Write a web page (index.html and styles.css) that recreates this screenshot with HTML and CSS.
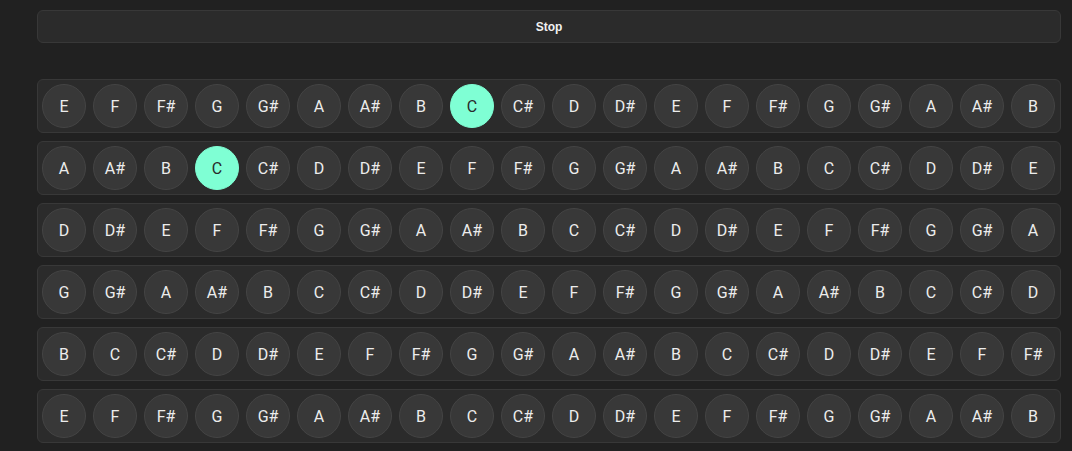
FILE: index.html
```html
<!DOCTYPE html>
<html>
<head>
<meta charset="utf-8">
<link rel="stylesheet" href="styles.css">
</head>
<body>
<div class="app">
  <button class="stop">Stop</button>
  <div class="board">
    <div class="string"><span class="note">E</span><span class="note">F</span><span class="note">F#</span><span class="note">G</span><span class="note">G#</span><span class="note">A</span><span class="note">A#</span><span class="note">B</span><span class="note active">C</span><span class="note">C#</span><span class="note">D</span><span class="note">D#</span><span class="note">E</span><span class="note">F</span><span class="note">F#</span><span class="note">G</span><span class="note">G#</span><span class="note">A</span><span class="note">A#</span><span class="note">B</span></div>
    <div class="string"><span class="note">A</span><span class="note">A#</span><span class="note">B</span><span class="note active">C</span><span class="note">C#</span><span class="note">D</span><span class="note">D#</span><span class="note">E</span><span class="note">F</span><span class="note">F#</span><span class="note">G</span><span class="note">G#</span><span class="note">A</span><span class="note">A#</span><span class="note">B</span><span class="note">C</span><span class="note">C#</span><span class="note">D</span><span class="note">D#</span><span class="note">E</span></div>
    <div class="string"><span class="note">D</span><span class="note">D#</span><span class="note">E</span><span class="note">F</span><span class="note">F#</span><span class="note">G</span><span class="note">G#</span><span class="note">A</span><span class="note">A#</span><span class="note">B</span><span class="note">C</span><span class="note">C#</span><span class="note">D</span><span class="note">D#</span><span class="note">E</span><span class="note">F</span><span class="note">F#</span><span class="note">G</span><span class="note">G#</span><span class="note">A</span></div>
    <div class="string"><span class="note">G</span><span class="note">G#</span><span class="note">A</span><span class="note">A#</span><span class="note">B</span><span class="note">C</span><span class="note">C#</span><span class="note">D</span><span class="note">D#</span><span class="note">E</span><span class="note">F</span><span class="note">F#</span><span class="note">G</span><span class="note">G#</span><span class="note">A</span><span class="note">A#</span><span class="note">B</span><span class="note">C</span><span class="note">C#</span><span class="note">D</span></div>
    <div class="string"><span class="note">B</span><span class="note">C</span><span class="note">C#</span><span class="note">D</span><span class="note">D#</span><span class="note">E</span><span class="note">F</span><span class="note">F#</span><span class="note">G</span><span class="note">G#</span><span class="note">A</span><span class="note">A#</span><span class="note">B</span><span class="note">C</span><span class="note">C#</span><span class="note">D</span><span class="note">D#</span><span class="note">E</span><span class="note">F</span><span class="note">F#</span></div>
    <div class="string"><span class="note">E</span><span class="note">F</span><span class="note">F#</span><span class="note">G</span><span class="note">G#</span><span class="note">A</span><span class="note">A#</span><span class="note">B</span><span class="note">C</span><span class="note">C#</span><span class="note">D</span><span class="note">D#</span><span class="note">E</span><span class="note">F</span><span class="note">F#</span><span class="note">G</span><span class="note">G#</span><span class="note">A</span><span class="note">A#</span><span class="note">B</span></div>
  </div>
</div>
</body>
</html>
```
FILE: styles.css
```css
html, body {
  margin: 0;
  padding: 0;
  background: #212121;
  height: 100%;
  overflow: hidden;
}
body {
  font-family: Roboto, "Liberation Sans", sans-serif;
  color: #e8e8e8;
}
.app {
  padding: 10px 11px 8px 37px;
  display: flex;
  flex-direction: column;
  gap: 36px;
}
.stop {
  height: 33px;
  background: #2b2b2b;
  border: 1px solid #383838;
  border-radius: 6px;
  color: #f0f0f0;
  font-family: "Liberation Sans", Arial, sans-serif;
  font-weight: bold;
  font-size: 12px;
  padding: 0;
}
.board {
  display: flex;
  flex-direction: column;
  gap: 8px;
}
.string {
  display: grid;
  grid-template-columns: repeat(20, 44px);
  justify-content: space-between;
  padding: 4px 5px 4px 4px;
  background: #2b2b2b;
  border: 1px solid #383838;
  border-radius: 6px;
}
.note {
  box-sizing: border-box;
  width: 44px;
  height: 44px;
  border-radius: 50%;
  background: #383838;
  border: 1px solid #444444;
  display: flex;
  align-items: center;
  justify-content: center;
  font-size: 16px;
  color: #ececec;
}
.note.active {
  background: #7fffd4;
  border-color: #7fffd4;
  color: #2a2a2a;
}
```
